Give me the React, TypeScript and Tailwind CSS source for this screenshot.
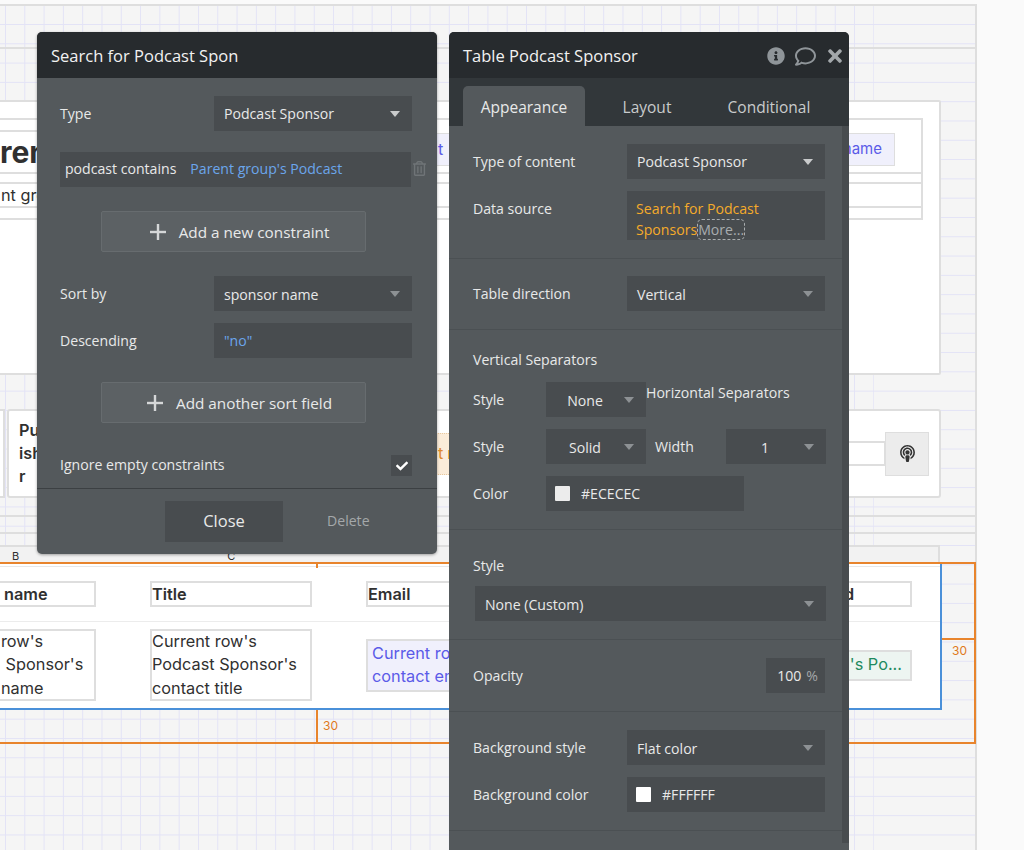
import { FaCheck, FaInfoCircle, FaPodcast, FaRegComment, FaRegTrashAlt, FaTimes } from 'react-icons/fa';

const Caret = ({ dim }: { dim?: boolean }) => (
  <span
    className={`block h-0 w-0 border-x-[5.5px] border-t-[6px] border-x-transparent ${dim ? 'border-t-[#8d9194]' : 'border-t-[#c9cbcc]'}`}
  />
);

const Select = ({ value, className, dim, center }: { value: string; className: string; dim?: boolean; center?: boolean }) => (
  <div className={`flex h-[35px] items-center bg-[#484c4f] pl-[10px] pr-[12px] text-[#e8e9e9] ${className}`}>
    <span className={`flex-1 ${center ? 'pr-[10px] text-center' : ''} ${dim ? 'pt-[2px]' : ''}`}>{value}</span>
    <Caret dim={dim} />
  </div>
);

const Swatch = ({ color, value, className }: { color: string; value: string; className: string }) => (
  <div className={`flex h-[35px] items-center bg-[#484c4f] pl-[9px] text-[#e8e9e9] ${className}`}>
    <span className={`mr-[11px] h-[15px] w-[15px] rounded-[1px] ${color}`} />
    {value}
  </div>
);

const Plus = () => (
  <svg width="16" height="16" viewBox="0 0 16 16" className="mr-[13px]">
    <rect x="6.8" y="0" width="2.4" height="16" fill="#d5d7d8" />
    <rect x="0" y="6.8" width="16" height="2.4" fill="#d5d7d8" />
  </svg>
);

const AddButton = ({ label }: { label: string }) => (
  <div className="ml-[64px] mt-[24px] flex h-[41px] w-[265px] items-center justify-center rounded-[2px] border border-[#676c6f] bg-[#5c6164] pl-[12px] pt-[1px] text-[15.3px] text-[#e8e9e9]">
    <Plus />
    {label}
  </div>
);

const Field = ({ label, children, className }: { label: string; children: React.ReactNode; className?: string }) => (
  <div className={`flex items-center ${className ?? ''}`}>
    <span className="w-[154px] text-[#e8e9e9]">{label}</span>
    {children}
  </div>
);

const Canvas = () => (
  <div className="relative isolate flex h-[846px] w-[977px] flex-col border-r-2 border-t-2 border-[#dedede] bg-[#f5f5f5] pt-[41px] font-['Inter',sans-serif] text-[#303030]">
    {/* grid */}
    <div className="absolute inset-0 -z-10 bg-[linear-gradient(to_bottom,#e3e3f6_1px,transparent_1px)] bg-[size:100%_19.3px] bg-[position:0_-1.3px]" />
    <div className="absolute bottom-0 left-0 top-0 -z-10 w-[874px] bg-[linear-gradient(to_right,#e3e3f6_1px,transparent_1px)] bg-[size:19.3px_100%] bg-[position:5px_0]" />

    <div className="h-[2px] bg-[#dedede]" />

    {/* top card */}
    <div className="ml-[-10px] mt-[51px] h-[275px] w-[951px] shrink-0 rounded-[2px] border-2 border-[#dedede] bg-white pt-[16px]">
      <div className="w-[931px] border-2 border-[#dedede]">
        <div className="flex h-[54px] items-start border-b-2 border-[#dedede] pt-[10px]">
          <div className="ml-[6px] w-[48px] overflow-hidden whitespace-nowrap border-t-2 border-[#dedede] pt-[2px] text-[30px] font-bold leading-[36px]">rent</div>
          <div className="ml-auto mr-[26px] mt-[3px] flex h-[33px] w-[475px] items-center justify-between border border-[#dedede] bg-[#f0f0fc] pl-[17px] pr-[12px] text-[15px] text-[#5b5be8]">
            <span className="text-[16.3px]">t</span>
            <span>name</span>
          </div>
        </div>
        <div className="h-[10px] border-b-2 border-[#dedede]" />
        <div className="h-[24px] border-b-2 border-[#dedede] pl-[7px] text-[16.3px] leading-[22px]">nt group</div>
        <div className="h-[10px]" />
      </div>
    </div>

    {/* publisher card */}
    <div className="mt-[34px] flex h-[89px] shrink-0">
      <div className="ml-[-10px] w-[15px] border-2 border-[#dedede] bg-white" />
      <div className="ml-[2px] flex w-[934px] items-center rounded-[3px] border-2 border-[#dedede] bg-white">
        <div className="ml-[10px] w-[20px] text-[16.3px] font-semibold leading-[23px]">
          Pu
          <br />
          ish
          <br />r
        </div>
        <div className="ml-[386px] flex h-[42px] w-[40px] items-center gap-[4px] border border-dotted border-[#e8c9a0] bg-[#fbecd9] pl-[12px] text-[16.3px] text-[#e08a2c]">
          <span>t</span>
          <span>r</span>
        </div>
        <div className="ml-[335px] h-[25px] w-[86px] border-2 border-[#dedede] bg-white" />
        <div className="ml-[-1px] flex h-[44px] w-[44px] items-center justify-center border border-[#dedede] bg-[#ececec] text-[#333]">
          <FaPodcast size={17} />
        </div>
      </div>
    </div>

    <div className="mt-[17px] h-[2px] shrink-0 bg-[#dedede]" />
    <div className="mt-[15px] h-[2px] shrink-0 bg-[#dedede]" />

    {/* column letters */}
    <div className="ml-[-5px] mt-[11px] flex h-[18px] w-[945px] shrink-0 items-center border-x-2 border-t-2 border-[#dedede] bg-[#f2f2f2] pl-[15px] pt-[3px] text-[11px] leading-[13px]">
      <span>B</span>
      <span className="ml-[208px]">C</span>
    </div>

    {/* table with its margins */}
    <div className="relative ml-[-5px] mt-[-1px] h-[182px] w-[981px] shrink-0 border-2 border-[#e8842c]">
      <div className="w-[945px] border-b-2 border-r-2 border-b-[#4a90d9] border-r-[#4a90d9] bg-white">
        <div className="h-[2px] bg-white" />
        <div className="h-[1px] bg-[#e8e8e8]" />
        <div className="flex h-[55px] items-center border-b border-[#ececec] text-[16.3px] font-semibold leading-[22px]">
          <div className="ml-[-7px] h-[26px] w-[106px] border-2 border-[#dedede] pl-[12px]">name</div>
          <div className="ml-[54px] h-[26px] w-[162px] border-2 border-[#dedede]">Title</div>
          <div className="ml-[54px] h-[26px] w-[90px] border-2 border-[#dedede]">Email</div>
          <div className="ml-[364px] h-[26px] w-[92px] border-2 border-[#dedede] pl-[22px]">d</div>
        </div>
        <div className="flex h-[86px] items-center text-[16.3px] leading-[23.4px]">
          <div className="ml-[-7px] h-[72px] w-[106px] border-2 border-[#dedede] pl-[9px]">
            <div className="-mt-[1px]">
              row's
              <br />
              &nbsp;Sponsor's
              <br />
              name
            </div>
          </div>
          <div className="ml-[54px] h-[72px] w-[162px] border-2 border-[#dedede]">
            <div className="-mt-[1px]">
              Current row's
              <br />
              Podcast Sponsor's
              <br />
              contact title
            </div>
          </div>
          <div className="ml-[54px] h-[53px] w-[90px] overflow-hidden whitespace-nowrap border-2 border-[#dedede] bg-[#f0f0fc] pl-[4px] pt-[1px] text-[#5b5be8]">
            Current row's
            <br />
            contact email
          </div>
          <div className="ml-[364px] flex h-[31px] w-[92px] items-center justify-end border-2 border-[#dedede] bg-[#edf5f1] pr-[8px] text-[#1f8a5f]">'s Po...</div>
        </div>
      </div>
      <div className="absolute left-[319px] top-[-2px] h-[6px] w-[2px] bg-[#e8842c]" />
      <div className="absolute left-[319px] top-[146px] h-[32px] w-[2px] bg-[#e8842c]" />
      <div className="absolute left-[945px] top-[74px] h-[2px] w-[32px] bg-[#e8842c]" />
      <div className="absolute left-[326px] top-[155px] text-[12px] leading-[14px] text-[#e07a1c]">30</div>
      <div className="absolute left-[955px] top-[80px] text-[12px] leading-[14px] text-[#e07a1c]">30</div>
    </div>
  </div>
);

const SearchPanel = () => (
  <div className="absolute left-[37px] top-[32px] h-[522px] w-[400px] overflow-hidden rounded-[5px] bg-[#54595c] text-[14.1px] shadow-[0_1px_3px_rgba(0,0,0,0.35)]">
    <div className="flex h-[46px] items-center bg-[#272b2e] pl-[14px] pt-[2px] text-[16.5px] text-[#f2f2f2]">Search for Podcast Spon</div>
    <div className="pl-[23px] pr-[25px] pt-[18px]">
      <Field label="Type">
        <Select value="Podcast Sponsor" className="w-[198px]" />
      </Field>
      <div className="relative mt-[21px] flex h-[35px] w-[351px] items-center bg-[#484c4f] pb-[2px] pl-[5px] text-[#e8e9e9]">
        podcast contains
        <span className="ml-[14px] text-[#6ba6ec]">Parent group's Podcast</span>
        <FaRegTrashAlt size={15} className="absolute right-[-16px] top-[9px] text-[#6f7477]" />
      </div>
    </div>
    <AddButton label="Add a new constraint" />
    <div className="pl-[23px] pr-[25px] pt-[24px]">
      <Field label="Sort by">
        <Select value="sponsor name" className="w-[198px]" dim />
      </Field>
      <Field label="Descending" className="mt-[12px]">
        <div className="flex h-[35px] w-[198px] items-center bg-[#484c4f] pl-[10px] text-[#6ba6ec]">"no"</div>
      </Field>
    </div>
    <AddButton label="Add another sort field" />
    <div className="mt-[32px] flex h-[21px] items-center justify-between pl-[23px] pr-[25px] text-[#e8e9e9]">
      <span className="-mt-[2px]">Ignore empty constraints</span>
      <span className="flex h-[21px] w-[21px] items-center justify-center bg-[#484c4f] text-white">
        <FaCheck size={12} />
      </span>
    </div>
    <div className="mt-[12px] h-[1px] bg-[#3c4043]" />
    <div className="mt-[12px] flex h-[41px] items-center pl-[128px]">
      <div className="flex h-[41px] w-[118px] items-center justify-center bg-[#484c4f] text-[16.5px] text-[#e8e9e9]">Close</div>
      <span className="ml-[44px] pb-[2px] text-[#a4a8aa]">Delete</span>
    </div>
  </div>
);

const Section = ({ children, className }: { children: React.ReactNode; className?: string }) => (
  <div className={`border-b border-[#4b5053] pb-[18px] pl-[24px] ${className ?? ''}`}>{children}</div>
);

const PropertyPanel = () => (
  <div className="absolute left-[449px] top-[32px] h-[818px] w-[400px] overflow-hidden rounded-t-[5px] bg-[#54595c] text-[14.1px] text-[#e8e9e9]">
    <div className="flex h-[46px] items-center bg-[#272b2e] pl-[14px] pr-[4px] pt-[2px] text-[16.5px] text-[#f2f2f2]">
      <span className="flex-1">Table Podcast Sponsor</span>
      <FaInfoCircle size={18} className="text-[#8f9599]" />
      <FaRegComment size={21} className="ml-[10px] mt-[1px] text-[#8f9599]" />
      <FaTimes size={20} className="ml-[9px] text-[#a3a8ab]" />
    </div>
    <div className="flex h-[48px] items-end bg-[#32373a] pl-[14px] text-[15.5px]">
      <div className="flex h-[40px] w-[122px] items-center justify-center rounded-t-[5px] bg-[#54595c] pt-[3px]">Appearance</div>
      <div className="flex h-[40px] w-[124px] items-center justify-center pt-[3px] text-[#c9cbcc]">Layout</div>
      <div className="flex h-[40px] w-[120px] items-center justify-center pt-[3px] text-[#c9cbcc]">Conditional</div>
    </div>
    <div className="absolute right-0 top-[94px] h-[717px] w-[7px] bg-[#484c4f]" />
    <div className="w-[393px]">
      <Section className="pt-[18px]">
        <Field label="Type of content">
          <Select value="Podcast Sponsor" className="w-[198px]" />
        </Field>
        <div className="mt-[12px] flex items-start">
          <span className="mt-[7px] w-[154px]">Data source</span>
          <div className="h-[49px] w-[198px] overflow-hidden bg-[#484c4f] pl-[9px] pt-[7px] leading-[21px] text-[#f5ab2a]">
            Search for Podcast
            <br />
            Sponsors
            <span className="rounded-[5px] border border-dashed border-[#a9adaf] text-[#a9adaf]">More...</span>
          </div>
        </div>
      </Section>
      <Section className="pt-[17px]">
        <Field label="Table direction">
          <Select value="Vertical" className="w-[198px]" dim />
        </Field>
      </Section>
      <Section className="pt-[20px]">
        <div className="h-[20px] leading-[20px]">Vertical Separators</div>
        <div className="mt-[12px] flex items-center">
          <span className="w-[73px]">Style</span>
          <Select value="None" className="w-[100px]" dim center />
          <span className="relative top-[-7px]">Horizontal Separators</span>
        </div>
        <div className="mt-[12px] flex items-center">
          <span className="w-[73px]">Style</span>
          <Select value="Solid" className="w-[100px]" dim center />
          <span className="ml-[9px] w-[71px]">Width</span>
          <Select value="1" className="w-[100px]" dim center />
        </div>
        <div className="mt-[12px] flex items-center">
          <span className="w-[73px]">Color</span>
          <Swatch color="bg-[#ececec]" value="#ECECEC" className="w-[198px]" />
        </div>
      </Section>
      <Section className="pt-[26px]">
        <div className="h-[20px] leading-[20px]">Style</div>
        <Select value="None (Custom)" className="ml-[2px] mt-[10px] w-[351px]" dim />
      </Section>
      <Section className="pt-[18px]">
        <div className="flex items-center justify-between pr-[17px]">
          Opacity
          <div className="flex h-[35px] w-[59px] items-center justify-end gap-[5px] bg-[#484c4f] pr-[7px]">
            100 <span className="text-[#a4a8aa]">%</span>
          </div>
        </div>
      </Section>
      <Section className="pt-[18px]">
        <Field label="Background style">
          <Select value="Flat color" className="w-[198px]" dim />
        </Field>
        <Field label="Background color" className="mt-[12px]">
          <Swatch color="bg-white" value="#FFFFFF" className="w-[198px]" />
        </Field>
      </Section>
    </div>
  </div>
);

export default function App() {
  return (
    <div className="relative h-[850px] w-[1024px] overflow-hidden bg-[#fafafa] pt-[4px] font-['Open_Sans',sans-serif]">
      <Canvas />
      <SearchPanel />
      <PropertyPanel />
    </div>
  );
}
